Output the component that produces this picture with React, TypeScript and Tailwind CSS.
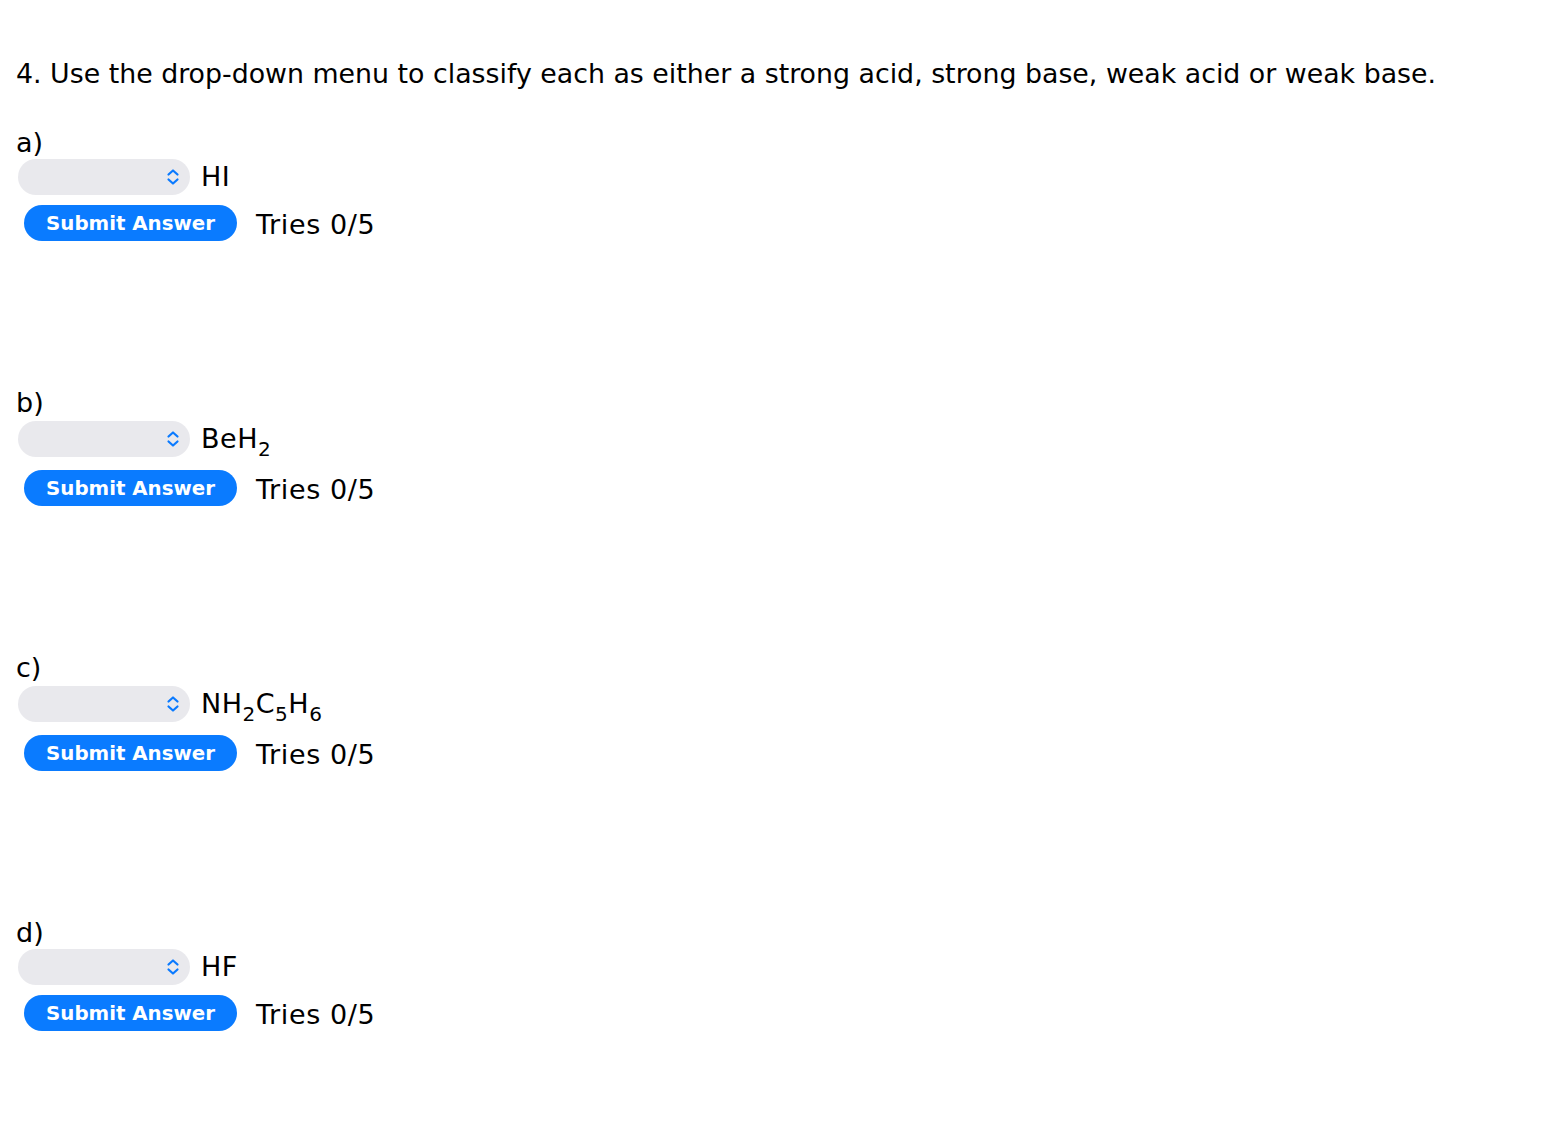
import React from 'react';

const subCls = 'text-[20px] bottom-[-8px]';

const items = [
  { label: 'a)', formula: <>HI</>, sub: false },
  { label: 'b)', formula: <>BeH<sub className={subCls}>2</sub></>, sub: true },
  {
    label: 'c)',
    formula: (
      <>
        NH<sub className={subCls}>2</sub>C<sub className={subCls}>5</sub>H<sub className={subCls}>6</sub>
      </>
    ),
    sub: true,
  },
  { label: 'd)', formula: <>HF</>, sub: false },
];

function Chevrons() {
  return (
    <svg width="14" height="18" viewBox="0 0 14 18" fill="none" stroke="#0a7aff" strokeWidth="2.2" strokeLinecap="round" strokeLinejoin="round">
      <path d="M2.5 6.5 L7 2.5 L11.5 6.5" />
      <path d="M2.5 11.5 L7 15.5 L11.5 11.5" />
    </svg>
  );
}

export default function App() {
  return (
    <div className="bg-white min-h-screen pt-[58px] pl-4 text-black font-['DejaVu_Sans',Verdana,sans-serif]">
      <p className="text-[26.8px] leading-[32px]">
        4. Use the drop-down menu to classify each as either a strong acid, strong base, weak acid or weak base.
      </p>

      <div className="mt-[37px]">
        {items.map((item) => (
          <div key={item.label} className="mb-[146px]">
            <div className="text-[27px] leading-[32px]">{item.label}</div>

            <div className={`flex items-center ${item.sub ? 'pt-[2px] pb-[3px]' : ''}`}>
              <div className="ml-[2px] w-[172px] h-[36px] rounded-full bg-[#e9e9ed] flex items-center justify-end pr-[10px]">
                <Chevrons />
              </div>
              <span className="ml-[11px] text-[27px] leading-[36px] tracking-[0.5px]">{item.formula}</span>
            </div>

            <div className="flex items-center h-[36px] mt-[10px]">
              <button className="ml-[8px] w-[213px] h-[36px] rounded-full bg-[#0a7bff] text-white text-[19.8px] font-bold leading-none pt-[1px]">
                Submit Answer
              </button>
              <span className="ml-[19px] mt-[4px] text-[27px] leading-[36px] tracking-[0.6px]">Tries 0/5</span>
            </div>
          </div>
        ))}
      </div>
    </div>
  );
}
